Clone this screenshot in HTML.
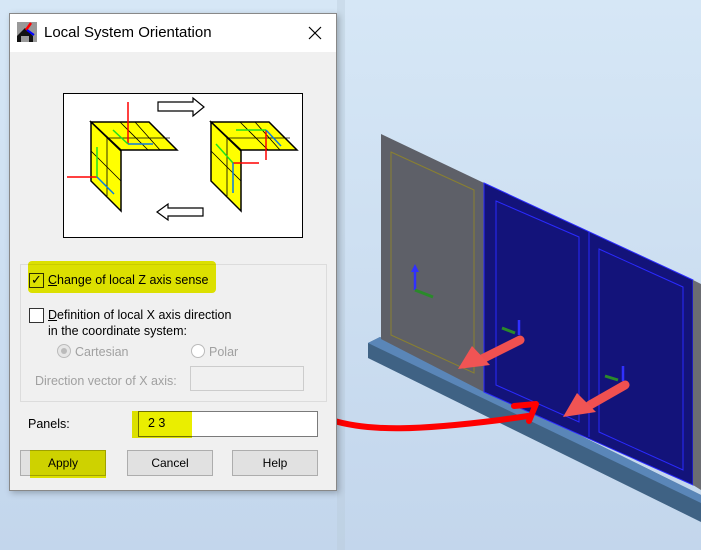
<!DOCTYPE html>
<html><head><meta charset="utf-8"><style>
*{margin:0;padding:0;box-sizing:border-box}
body{width:701px;height:550px;overflow:hidden;position:relative;background:linear-gradient(#d6e7f6,#c3d6ec);font-family:"Liberation Sans",sans-serif;font-size:12px;color:#000}
.a{position:absolute}
.dlg{left:9px;top:13px;width:328px;height:478px;background:#f0f0f0;border:1px solid #888;box-shadow:2px 2px 6px rgba(0,0,0,.25)}
.title{left:0;top:0;width:326px;height:38px;background:#fff}
.btn{background:#e1e1e1;border:1px solid #adadad;height:26px;text-align:center;line-height:24px}
.hl{background:#eaee00;mix-blend-mode:multiply}
.dis{color:#a0a0a0}
</style></head><body>
<svg class="a" style="left:0;top:0" width="701" height="550">
<rect x="337" y="0" width="8" height="550" fill="#b8c8d8" opacity=".35"/>
<polygon points="368,343 380,337 701,495 701,522 368,358" fill="#3f6284"/>
<polygon points="368,343 380,337 701,495 701,503" fill="#5a86b8"/>
<polygon points="381,134 484,183 484,392 381,339" fill="#5e6068"/>
<polygon points="391,152 474,190 474,373 391,335" fill="none" stroke="#8a8030" stroke-width="1"/>
<polygon points="484,183 693,280 693,485 484,392" fill="#13137a" stroke="#2a2aff" stroke-width="1"/>
<polygon points="693,280 701,284 701,490 693,485" fill="#6a6c72"/>
<polygon points="496,201 579,237 579,422 496,385" fill="none" stroke="#2a2aff"/>
<polygon points="599,249 683,287 683,470 599,432" fill="none" stroke="#2a2aff"/>
<line x1="589" y1="232" x2="589" y2="437" stroke="#2a2aff"/>
<line x1="415" y1="290" x2="415" y2="270" stroke="#3030ff" stroke-width="2.5"/>
<polygon points="411,272 419,272 415,264" fill="#3030ff"/>
<line x1="415" y1="290" x2="433" y2="297" stroke="#2a8a2a" stroke-width="3"/>
<line x1="520" y1="340" x2="480" y2="360" stroke="#f05050" stroke-width="9" stroke-linecap="round"/>
<polygon points="458,369 472,346 490,365" fill="#f05454"/>
<line x1="519" y1="335" x2="519" y2="320" stroke="#3030ff" stroke-width="2.5"/>
<line x1="515" y1="333" x2="502" y2="328" stroke="#2a8a2a" stroke-width="3"/>
<line x1="625" y1="385" x2="590" y2="405" stroke="#f05050" stroke-width="9" stroke-linecap="round"/>
<polygon points="563,417 577,393 596,412" fill="#f05454"/>
<line x1="623" y1="381" x2="623" y2="366" stroke="#3030ff" stroke-width="2.5"/>
<line x1="618" y1="380" x2="605" y2="376" stroke="#2a8a2a" stroke-width="3"/>
<path d="M331 420 C 370 432,420 430,500 420 L528 416 M514 406 L536 404 L529 421" fill="none" stroke="#ff0000" stroke-width="6" stroke-linecap="round" stroke-linejoin="round"/>
</svg>
<div class="a dlg">
<div class="a title"></div>
<svg class="a" style="left:7px;top:8px" width="20" height="20"><rect width="20" height="20" fill="#999"/><polygon points="0,14 8,6 16,14 16,20 12,20 12,14 4,14 4,20 0,20" fill="#111"/><line x1="9" y1="8" x2="14" y2="1" stroke="red" stroke-width="2.5"/><line x1="10" y1="8" x2="17" y2="13" stroke="blue" stroke-width="2"/></svg>
<div class="a" style="left:34px;top:10px;font-size:15px;color:#000">Local System Orientation</div>
<svg class="a" style="left:298px;top:12px" width="14" height="14"><path d="M1 1 L13 13 M13 1 L1 13" stroke="#000" stroke-width="1.2"/></svg>
<svg class="a" style="left:53px;top:78px" width="241" height="146" viewBox="63 91 241 146">
<rect x="63.5" y="92.5" width="239" height="144" fill="#fff" stroke="#000"/>
<g stroke="#000" stroke-width="1.5" fill="#ff0">
<polygon points="91,121 149,121 177,149 121,149"/><polygon points="91,121 121,150 121,210 91,180"/>
<polygon points="211,121 269,121 297,149 241,149"/><polygon points="211,121 241,150 241,210 211,180"/></g>
<g stroke="#000" stroke-width=".8" fill="none">
<path d="M107 137 V195 M107 137 H170 M91 150 L121 180 M120 121 L148 149 M135 121 L160 149"/>
<path d="M227 137 V195 M227 137 H290 M211 150 L241 180 M240 121 L268 149 M255 121 L280 149"/></g>
<g stroke-width="1.5" fill="none">
<path d="M128 101 V143 M67 176 H97 M266 129 V159 M233 162 H259" stroke="red"/>
<path d="M128 143 H153 M97 176 L114 193 M266 129 L281 145 M233 162 V192" stroke="#0a7ae0"/>
<path d="M113 129 L128 143 M97 146 V176 M236 129 H266 M216 143 L233 162" stroke="#1ee01e"/></g>
<polygon points="158,101 193,101 193,97 204,106 193,115 193,110 158,110" fill="#fff" stroke="#000" stroke-width="1.2"/>
<polygon points="203,207 168,207 168,203 157,211 168,219 168,215 203,215" fill="#fff" stroke="#000" stroke-width="1.2"/>
</svg>
<div class="a" style="left:10px;top:250px;width:307px;height:138px;border:1px solid #dcdcdc"></div>
<div class="a" style="left:19px;top:259px;width:15px;height:15px;border:1px solid #333;font-size:13px;line-height:12px;text-align:center">✓</div>
<div class="a" style="left:38px;top:259px;font-size:12.5px"><u>C</u>hange of local Z axis sense</div>
<div class="a hl" style="left:18px;top:247px;width:188px;height:32px;border-radius:4px"></div>
<div class="a" style="left:19px;top:294px;width:15px;height:15px;border:1px solid #333;background:#fff"></div>
<div class="a" style="left:38px;top:293px;font-size:12.5px;line-height:16px"><u>D</u>efinition of local X axis direction<br>in the coordinate system:</div>
<div class="a" style="left:47px;top:330px;width:14px;height:14px;border-radius:50%;border:1px solid #bbb;background:#e6e6e6"><div class="a" style="left:3px;top:3px;width:6px;height:6px;border-radius:50%;background:#bbb"></div></div>
<div class="a dis" style="left:65px;top:331px;font-size:12.5px">Cartesian</div>
<div class="a" style="left:181px;top:330px;width:14px;height:14px;border-radius:50%;border:1px solid #bbb;background:#fff"></div>
<div class="a dis" style="left:199px;top:331px;font-size:12.5px">Polar</div>
<div class="a dis" style="left:25px;top:360px;font-size:12.5px">Direction vector of X axis:</div>
<div class="a" style="left:180px;top:352px;width:114px;height:25px;border:1px solid #ccc;background:#f0f0f0"></div>
<div class="a" style="left:18px;top:403px;font-size:12.5px">Panels:</div>
<div class="a" style="left:128px;top:397px;width:180px;height:26px;border:1px solid #7a7a7a;background:#fff"></div>
<div class="a" style="left:138px;top:402px;font-size:12.5px">2 3</div>
<div class="a hl" style="left:122px;top:397px;width:60px;height:27px"></div>
<div class="a btn" style="left:10px;top:436px;width:86px">Apply</div>
<div class="a hl" style="left:20px;top:436px;width:76px;height:28px"></div>
<div class="a btn" style="left:117px;top:436px;width:86px">Cancel</div>
<div class="a btn" style="left:222px;top:436px;width:86px">Help</div>
</div>
</body></html>
